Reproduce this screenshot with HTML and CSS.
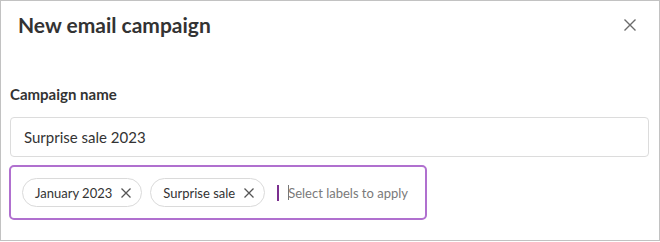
FILE: index.html
```html
<!DOCTYPE html>
<html lang="en">
<head>
<meta charset="utf-8">
<title>New email campaign</title>
<link rel="stylesheet" href="styles.css">
</head>
<body>
<div class="frame">
  <header class="header">
    <h1 class="title">New email campaign</h1>
    <button class="close" aria-label="Close">
      <svg width="12" height="12" viewBox="0 0 12 12"><path d="M0.5 0.5 L11.5 11.5 M11.5 0.5 L0.5 11.5" stroke="#6b6b6b" stroke-width="1.4" fill="none"/></svg>
    </button>
  </header>
  <div class="content">
    <label class="field-label">Campaign name</label>
    <div class="input">Surprise sale 2023</div>
    <div class="labels">
      <span class="chip"><span class="chip-text">January 2023</span>
        <svg class="chip-x" width="10" height="10" viewBox="0 0 10 10"><path d="M0.5 0.5 L9.5 9.5 M9.5 0.5 L0.5 9.5" stroke="#555" stroke-width="1.3" fill="none"/></svg>
      </span>
      <span class="chip"><span class="chip-text">Surprise sale</span>
        <svg class="chip-x" width="10" height="10" viewBox="0 0 10 10"><path d="M0.5 0.5 L9.5 9.5 M9.5 0.5 L0.5 9.5" stroke="#555" stroke-width="1.3" fill="none"/></svg>
      </span>
      <span class="divider"></span>
      <span class="placeholder"><span class="caret"></span>Select labels to apply</span>
    </div>
  </div>
</div>
</body>
</html>
```

FILE: styles.css
```css
html, body {
  margin: 0;
  padding: 0;
  background: #ffffff;
}
body {
  font-family: Lato, "Open Sans", sans-serif;
  color: #333333;
}
.frame {
  width: 660px;
  height: 241px;
  box-sizing: border-box;
  border: 1px solid #c2c2c2;
  background: #fff;
}
.header {
  display: flex;
  align-items: flex-start;
  justify-content: space-between;
  padding: 10px 23px 0 17px;
}
.title {
  margin: 0;
  font-size: 21px;
  line-height: 28px;
  font-weight: 700;
  color: #333;
}
.close {
  border: 0;
  background: none;
  padding: 0;
  margin-top: 8px;
  width: 12px;
  height: 12px;
  display: flex;
}
.content {
  padding: 45px 10px 0 9px;
}
.field-label {
  display: block;
  font-size: 15px;
  line-height: 20px;
  font-weight: 700;
  color: #333;
}
.input {
  margin-top: 13px;
  height: 40px;
  box-sizing: border-box;
  border: 1px solid #dcdcdc;
  border-radius: 4px;
  padding: 0 13px;
  display: flex;
  align-items: center;
  font-size: 15px;
  color: #333;
}
.labels {
  margin-top: 8px;
  margin-left: -1px;
  width: 418px;
  height: 55px;
  box-sizing: border-box;
  border: 2px solid #b070cf;
  border-radius: 5px;
  padding: 0 11px;
  display: flex;
  align-items: center;
  gap: 8px;
  white-space: nowrap;
}
.chip {
  flex-shrink: 0;
  display: inline-flex;
  align-items: center;
  gap: 9px;
  height: 29px;
  box-sizing: border-box;
  border: 1px solid #dadada;
  border-radius: 15px;
  padding: 0 10px 0 12px;
  font-size: 13px;
  color: #333;
}
.chip-x {
  flex-shrink: 0;
}
.divider {
  flex-shrink: 0;
  width: 2px;
  height: 16px;
  background: #7b2f8f;
  margin-left: 4px;
}
.placeholder {
  display: inline-flex;
  align-items: center;
  margin-left: 1px;
  font-size: 13px;
  color: #7a7a7a;
}
.caret {
  width: 1px;
  height: 15px;
  background: #777;
  margin-right: -1px;
}
```
